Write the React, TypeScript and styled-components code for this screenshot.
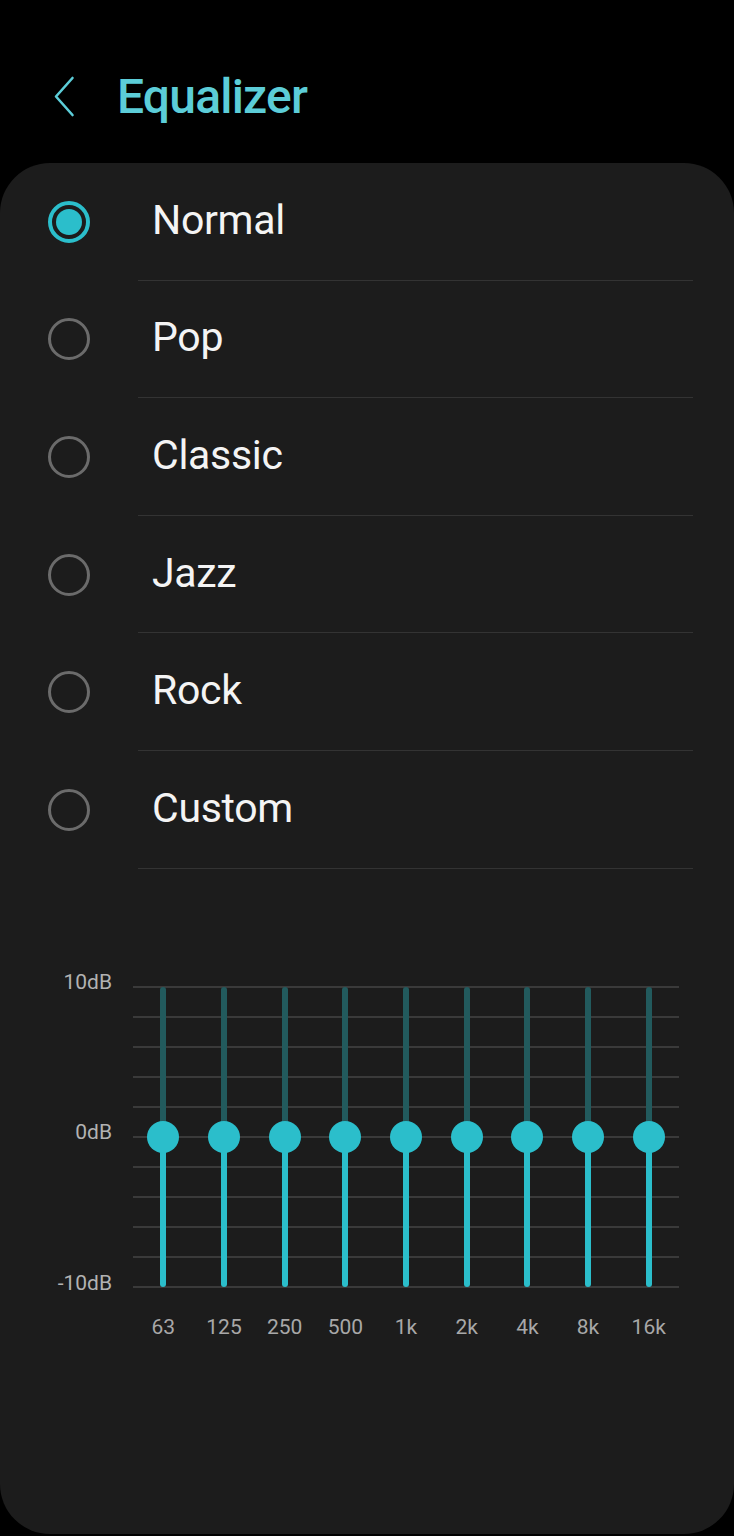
import React from "react";
import styled, { createGlobalStyle } from "styled-components";

const GlobalStyle = createGlobalStyle`
  html, body { margin: 0; padding: 0; background: #000; }
  body { font-family: Roboto, "Noto Sans", "Liberation Sans", sans-serif; -webkit-font-smoothing: antialiased; }
  * { box-sizing: border-box; }
`;

const Page = styled.div`
  width: 734px;
  height: 1536px;
  display: flex;
  flex-direction: column;
  background: #000;
`;

const Header = styled.header`
  height: 163px;
  flex: none;
  display: flex;
  align-items: center;
  padding: 30px 0 0 52px;
`;

const BackButton = styled.button`
  background: none;
  border: none;
  padding: 0;
  width: 24px;
  height: 42px;
  display: flex;
  align-items: center;
  justify-content: center;
  color: #5ccdd8;
`;

const Title = styled.h1`
  margin: 0 0 0 41px;
  font-size: 48px;
  font-weight: 500;
  letter-spacing: -0.8px;
  color: #5ccdd8;
  line-height: 1;
`;

const Card = styled.main`
  flex: none;
  height: 1371px;
  background: #1c1c1c;
  border-radius: 50px;
  display: flex;
  flex-direction: column;
`;

const List = styled.div`
  display: flex;
  flex-direction: column;
`;

const Row = styled.div`
  height: 117.6px;
  display: grid;
  grid-template-columns: 138px 1fr;
`;

const RadioCell = styled.div`
  display: flex;
  align-items: center;
  justify-content: center;
`;

const Radio = styled.span<{ $checked: boolean }>`
  width: 42px;
  height: 42px;
  border-radius: 50%;
  border: ${(p) => (p.$checked ? "4px solid #2bbecb" : "3px solid #6b6b6b")};
  display: flex;
  align-items: center;
  justify-content: center;
  &::after {
    content: "";
    display: ${(p) => (p.$checked ? "block" : "none")};
    width: 26px;
    height: 26px;
    border-radius: 50%;
    background: #2bbecb;
  }
`;

const Label = styled.div`
  margin-right: 41px;
  padding: 0 0 3px 14px;
  border-bottom: 1.5px solid #333333;
  display: flex;
  align-items: center;
  font-size: 41px;
  color: #f4f4f4;
  letter-spacing: -0.3px;
`;

const Chart = styled.section`
  padding-top: 117px;
  display: flex;
  flex-direction: column;
`;

const ChartBody = styled.div`
  display: flex;
  align-items: flex-start;
`;

const AxisLabels = styled.div`
  width: 133px;
  height: 325px;
  margin-top: -16px;
  padding-right: 21px;
  display: flex;
  flex-direction: column;
  justify-content: space-between;
  align-items: flex-end;
`;

const AxisLabel = styled.span`
  font-size: 21px;
  line-height: 24px;
  color: #b2b2b2;
`;

const Grid = styled.div`
  width: 546px;
  height: 302px;
  display: flex;
  background: repeating-linear-gradient(
    to bottom,
    #3a3a3a 0px,
    #3a3a3a 2px,
    transparent 2px,
    transparent 30px
  );
`;

const Band = styled.div`
  flex: 1;
  display: flex;
  justify-content: center;
  padding-top: 1px;
`;

const Track = styled.div`
  position: relative;
  width: 6px;
  height: 300px;
  border-radius: 3px;
  background: linear-gradient(to bottom, #225a5d 0 50%, #2bbecb 50% 100%);
`;

const Thumb = styled.span`
  position: absolute;
  left: 50%;
  width: 32px;
  height: 32px;
  margin: -16px 0 0 -16px;
  border-radius: 50%;
  background: #2bbecb;
`;

const FreqRow = styled.div`
  margin: 20px 0 0 133px;
  width: 546px;
  display: flex;
`;

const Freq = styled.span`
  flex: 1;
  text-align: center;
  font-size: 21px;
  line-height: 24px;
  color: #a8a8a8;
`;

const presets = ["Normal", "Pop", "Classic", "Jazz", "Rock", "Custom"];
const bands = ["63", "125", "250", "500", "1k", "2k", "4k", "8k", "16k"];
const gains = [0, 0, 0, 0, 0, 0, 0, 0, 0];

export default function App() {
  return (
    <>
      <GlobalStyle />
      <Page>
        <Header>
          <BackButton aria-label="Back">
            <svg width="22" height="41" viewBox="0 0 22 41" fill="none">
              <path d="M19.5 2 L3 20.5 L19.5 39" stroke="currentColor" strokeWidth="2.6" strokeLinecap="round" strokeLinejoin="round" />
            </svg>
          </BackButton>
          <Title>Equalizer</Title>
        </Header>
        <Card>
          <List>
            {presets.map((p, i) => (
              <Row key={p}>
                <RadioCell>
                  <Radio $checked={i === 0} />
                </RadioCell>
                <Label>{p}</Label>
              </Row>
            ))}
          </List>
          <Chart>
            <ChartBody>
              <AxisLabels>
                <AxisLabel>10dB</AxisLabel>
                <AxisLabel>0dB</AxisLabel>
                <AxisLabel>-10dB</AxisLabel>
              </AxisLabels>
              <Grid>
                {bands.map((b, i) => (
                  <Band key={b}>
                    <Track>
                      <Thumb style={{ top: `${50 - gains[i] * 5}%` }} />
                    </Track>
                  </Band>
                ))}
              </Grid>
            </ChartBody>
            <FreqRow>
              {bands.map((b) => (
                <Freq key={b}>{b}</Freq>
              ))}
            </FreqRow>
          </Chart>
        </Card>
      </Page>
    </>
  );
}
